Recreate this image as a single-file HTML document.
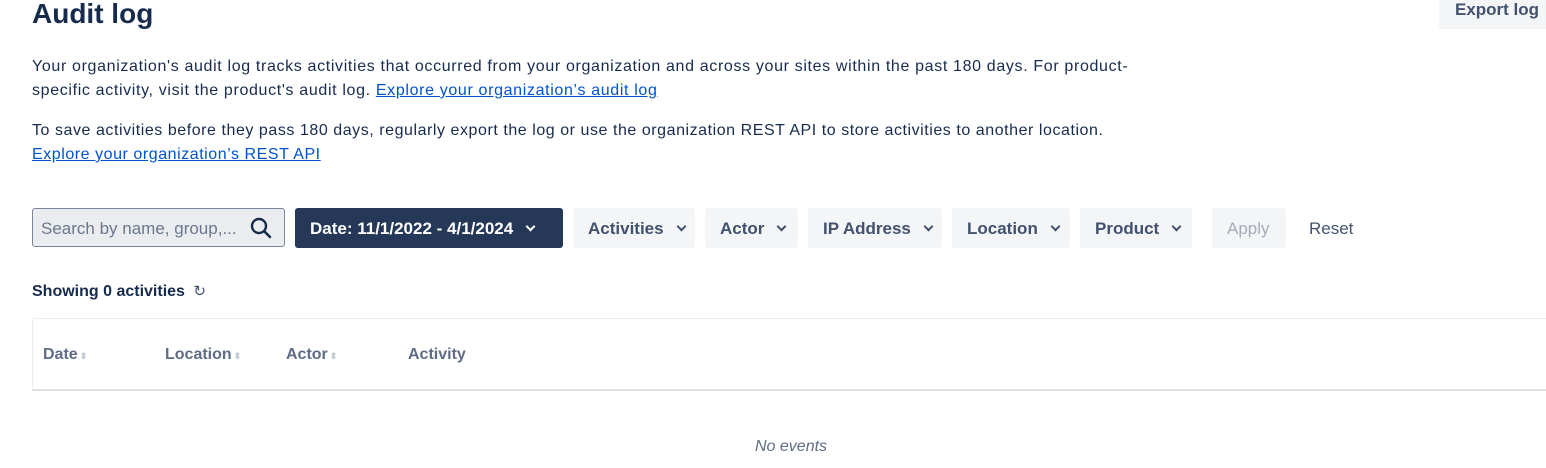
<!DOCTYPE html>
<html><head><meta charset="utf-8"><style>
body{margin:0;width:1546px;height:468px;overflow:hidden;background:#fff;font-family:"Liberation Sans",Arial,sans-serif;color:#172b4d;position:relative}
.a{position:absolute}
h1{position:absolute;left:32px;top:-2px;margin:0;font-size:28px;font-weight:bold;color:#172b4d;letter-spacing:0px}
.p{position:absolute;left:32px;font-size:16px;line-height:24px;color:#172b4d;width:1160px;letter-spacing:0.55px}
a{color:#0052cc;text-decoration:underline}
.btn{position:absolute;top:208px;height:40px;background:#f4f5f7;border-radius:3px;font-size:17px;font-weight:bold;color:#42526e;display:flex;align-items:center;box-sizing:border-box;padding-left:15px;padding-top:2px}
.chev{display:inline-block;width:5px;height:5px;border-right:2px solid currentColor;border-bottom:2px solid currentColor;transform:rotate(45deg);margin-left:14px;margin-top:-5px}
.th{position:absolute;top:346px;font-size:16px;font-weight:bold;color:#5e6c84}
.s{font-size:9px;color:#c1c7d0;margin-left:2px}
</style></head><body>
<h1>Audit log</h1>
<div class="a" style="left:1439px;top:-4px;width:110px;height:33px;background:#f4f5f7;border-radius:3px;font-size:17px;font-weight:bold;color:#42526e;padding-left:16px;box-sizing:border-box;line-height:28px">Export log</div>
<div class="p" style="top:55px;letter-spacing:0.65px">Your organization's audit log tracks activities that occurred from your organization and across your sites within the past 180 days. For product-<br>specific activity, visit the product's audit log. <a>Explore your organization’s audit log</a></div>
<div class="p" style="top:119px">To save activities before they pass 180 days, regularly export the log or use the organization REST API to store activities to another location.<br><a>Explore your organization’s REST API</a></div>
<div class="a" style="left:32px;top:208px;width:253px;height:39px;box-sizing:border-box;border:1px solid #7a869a;border-radius:3px;background:#ebecf0;font-size:17px;color:#6b778c;padding:10px 0 0 8px">Search by name, group,...</div>
<svg class="a" style="left:249px;top:216px" width="24" height="24" viewBox="0 0 24 24"><circle cx="10" cy="10" r="7" fill="none" stroke="#172b4d" stroke-width="2.4"/><path d="M15 15l6 6" stroke="#172b4d" stroke-width="2.6" stroke-linecap="round"/></svg>
<div class="btn" style="left:295px;width:268px;background:#253858;color:#fff">Date: 11/1/2022 - 4/1/2024<span class="chev"></span></div>
<div class="btn" style="left:573px;width:122px">Activities<span class="chev"></span></div>
<div class="btn" style="left:705px;width:93px">Actor<span class="chev"></span></div>
<div class="btn" style="left:808px;width:134px">IP Address<span class="chev"></span></div>
<div class="btn" style="left:952px;width:118px">Location<span class="chev"></span></div>
<div class="btn" style="left:1080px;width:112px">Product<span class="chev"></span></div>
<div class="btn" style="left:1212px;width:74px;color:#a5adba;font-weight:normal">Apply</div>
<div class="btn" style="left:1294px;width:74px;background:none;font-weight:normal;color:#42526e">Reset</div>
<div class="a" style="left:32px;top:282px;font-size:16px;font-weight:bold;color:#172b4d">Showing 0 activities <span style="font-size:15px;font-weight:normal;color:#42526e;margin-left:4px">↻</span></div>
<div class="a" style="left:32px;top:318px;width:1530px;height:70px;border:1px solid #ebecf0;border-bottom:2px solid #dfe1e6;border-radius:3px 0 0 0"></div>
<div class="th" style="left:43px">Date<span class="s">⬍</span></div>
<div class="th" style="left:165px">Location<span class="s">⬍</span></div>
<div class="th" style="left:286px">Actor<span class="s">⬍</span></div>
<div class="th" style="left:408px">Activity</div>
<div class="a" style="left:755px;top:438px;font-size:16px;font-style:italic;color:#5e6c84">No events</div>
</body></html>
